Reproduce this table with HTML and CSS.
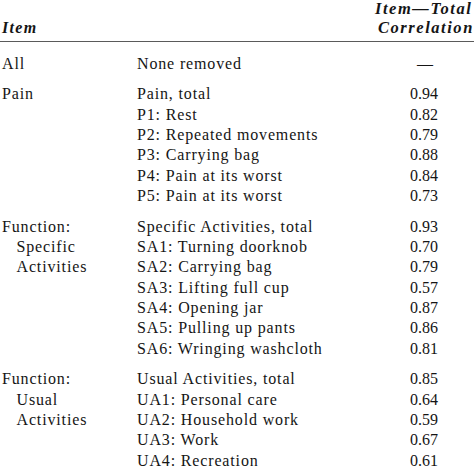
FILE: index.html
```html
<!DOCTYPE html>
<html>
<head>
<meta charset="utf-8">
<link rel="stylesheet" href="styles.css">
</head>
<body>
<div class="table">
  <div class="head">
    <div class="hcol1"><div class="hline first">&nbsp;</div><div class="hline">Item</div></div>
    <div class="hcol2"></div>
    <div class="hcol3"><div class="hline first">Item—Total</div><div class="hline second">Correlation</div></div>
  </div>
  <div class="body">
    <div class="group first">
      <div class="c1"><div class="ln">All</div></div>
      <div class="c2"><div class="ln">None removed</div></div>
      <div class="c3"><div class="ln dash">—</div></div>
    </div>
    <div class="group">
      <div class="c1"><div class="ln">Pain</div></div>
      <div class="c2">
        <div class="ln">Pain, total</div>
        <div class="ln">P1: Rest</div>
        <div class="ln">P2: Repeated movements</div>
        <div class="ln">P3: Carrying bag</div>
        <div class="ln">P4: Pain at its worst</div>
        <div class="ln">P5: Pain at its worst</div>
      </div>
      <div class="c3">
        <div class="ln">0.94</div>
        <div class="ln">0.82</div>
        <div class="ln">0.79</div>
        <div class="ln">0.88</div>
        <div class="ln">0.84</div>
        <div class="ln">0.73</div>
      </div>
    </div>
    <div class="group">
      <div class="c1">
        <div class="ln">Function:</div>
        <div class="ln ind">Specific</div>
        <div class="ln ind">Activities</div>
      </div>
      <div class="c2">
        <div class="ln">Specific Activities, total</div>
        <div class="ln">SA1: Turning doorknob</div>
        <div class="ln">SA2: Carrying bag</div>
        <div class="ln">SA3: Lifting full cup</div>
        <div class="ln">SA4: Opening jar</div>
        <div class="ln">SA5: Pulling up pants</div>
        <div class="ln">SA6: Wringing washcloth</div>
      </div>
      <div class="c3">
        <div class="ln">0.93</div>
        <div class="ln">0.70</div>
        <div class="ln">0.79</div>
        <div class="ln">0.57</div>
        <div class="ln">0.87</div>
        <div class="ln">0.86</div>
        <div class="ln">0.81</div>
      </div>
    </div>
    <div class="group">
      <div class="c1">
        <div class="ln">Function:</div>
        <div class="ln ind">Usual</div>
        <div class="ln ind">Activities</div>
      </div>
      <div class="c2">
        <div class="ln">Usual Activities, total</div>
        <div class="ln">UA1: Personal care</div>
        <div class="ln">UA2: Household work</div>
        <div class="ln">UA3: Work</div>
        <div class="ln">UA4: Recreation</div>
      </div>
      <div class="c3">
        <div class="ln">0.85</div>
        <div class="ln">0.64</div>
        <div class="ln">0.59</div>
        <div class="ln">0.67</div>
        <div class="ln">0.61</div>
      </div>
    </div>
  </div>
</div>
</body>
</html>
```
FILE: styles.css
```css
html, body {
  margin: 0;
  padding: 0;
  background: #ffffff;
  overflow: hidden;
}
body {
  font-family: "Liberation Serif", "Times New Roman", serif;
  font-size: 16px;
  line-height: 20.4px;
  color: #151515;
}
.table {
  width: 480px;
}
.head {
  display: grid;
  grid-template-columns: 137px 238px 105px;
  padding-bottom: 2px;
  border-bottom: 1px solid #5a5a5a;
}
.hcol1 {
  padding-left: 2px;
}
.hline {
  font-weight: bold;
  font-style: italic;
  white-space: nowrap;
  letter-spacing: 1.3px;
  height: 20.4px;
}
.hline.first {
  height: 18.4px;
  line-height: 18.4px;
}
.hcol3 .hline {
  font-size: 16.5px;
  letter-spacing: 1.55px;
}
.hcol3 .second {
  padding-left: 3px;
}
.body {
  padding-top: 12px;
}
.group {
  display: grid;
  grid-template-columns: 137px 238px 105px;
  margin-top: 10px;
}
.group.first {
  margin-top: 0;
}
.c1 {
  padding-left: 2px;
}
.ln {
  height: 20.4px;
  white-space: nowrap;
}
.c1 .ln, .c2 .ln {
  letter-spacing: 0.85px;
}
.ind {
  padding-left: 14.5px;
}
.c3 {
  text-align: right;
  padding-right: 42px;
}
.dash {
  padding-right: 5px;
}
```
